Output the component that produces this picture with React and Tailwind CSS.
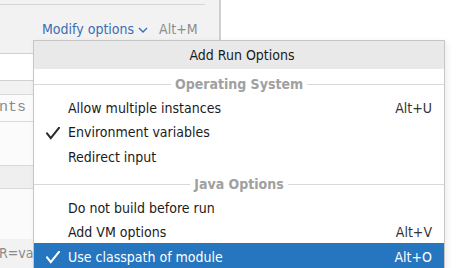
export default function App() {
  const Check = ({ color }) => (
    <svg width="14" height="13" viewBox="0 0 14 13" className="absolute left-[12px] top-[8px]">
      <path d="M1 6.5 L4.8 11.2 L13 0.8" fill="none" stroke={color} strokeWidth="2" strokeLinecap="square" strokeLinejoin="miter" />
    </svg>
  );
  const Item = ({ label, shortcut, checked, selected }) => (
    <div
      className={
        "relative flex h-[24.5px] items-center pt-[4px] pl-[34px] pr-[12px] " +
        (selected ? "bg-[#2675bf] text-white" : "text-[#1b1b1b]")
      }
    >
      {checked && <Check color={selected ? "#ffffff" : "#2b2b2b"} />}
      <span className="flex-1">{label}</span>
      {shortcut && <span className={selected ? "text-white" : "text-[#333333]"}>{shortcut}</span>}
    </div>
  );
  return (
    <div className="relative h-[268px] w-[474px] overflow-hidden bg-white font-['DejaVu_Sans_Condensed','Lato',sans-serif] text-[14px]">
      {/* background dialog */}
      <div className="flex h-full w-[221px] flex-col border-r-2 border-[#cfcfcf] bg-[#f2f2f2]">
        <div className="h-[5px] w-[205px] border-b border-[#d6d6d6]" />
        <div className="flex h-[48px] items-center pl-[42px]">
          <span className="text-[#3a6db3]">Modify options</span>
          <svg width="10" height="6" viewBox="0 0 10 6" className="ml-[4px] mt-[2px]">
            <path d="M1 1 L5 5 L9 1" fill="none" stroke="#3a6db3" strokeWidth="1.4" />
          </svg>
          <span className="ml-[11px] text-[#8c8c8c]">Alt+M</span>
        </div>
        <div className="h-[28px] border-y border-[#d0d0d0] bg-white" />
        <div className="h-[13px]" />
        <div className="flex h-[28px] items-center border-y border-[#d9d9d9] bg-[#fbfbfb] font-['Liberation_Mono',monospace] text-[15px] text-[#8a8a8a]">
          <span className="-ml-[1px]">nts</span>
        </div>
        <div className="h-[43px] bg-[#fbfbfb]" />
        <div className="h-[24px] border-y border-[#d9d9d9] bg-[#efefef]" />
        <div className="h-[50px] bg-[#fbfbfb]" />
        <div className="flex h-[26px] items-center bg-[#f2f2f2] pt-[2px] text-[#8a8a8a] whitespace-nowrap">
          <span className="-ml-[1px]">R=value</span>
        </div>
      </div>

      {/* popup */}
      <div className="absolute left-[33px] top-[40px] w-[412px] border border-[#c6c6c6] bg-white shadow-[2px_2px_6px_rgba(0,0,0,0.08)]">
        <div className="flex h-[28px] items-center justify-center bg-[#e9e9e9] pl-[6px] text-[#1b1b1b]">
          Add Run Options
        </div>
        <div className="flex h-[20px] items-center mt-[5px]">
          <div className="h-px flex-1 bg-[#d9d9d9]" />
          <span className="mx-[4px] font-bold text-[#a0a0a0]">Operating System</span>
          <div className="h-px flex-1 bg-[#d9d9d9]" />
        </div>
        <Item label="Allow multiple instances" shortcut="Alt+U" />
        <Item label="Environment variables" checked />
        <Item label="Redirect input" />
        <div className="flex h-[20px] items-center mt-[6.5px]">
          <div className="h-px flex-1 bg-[#d9d9d9]" />
          <span className="mx-[4px] font-bold text-[#a0a0a0]">Java Options</span>
          <div className="h-px flex-1 bg-[#d9d9d9]" />
        </div>
        <Item label="Do not build before run" />
        <Item label="Add VM options" shortcut="Alt+V" />
        <Item label="Use classpath of module" shortcut="Alt+O" checked selected />
        <div className="h-[10px]" />
      </div>
    </div>
  );
}
